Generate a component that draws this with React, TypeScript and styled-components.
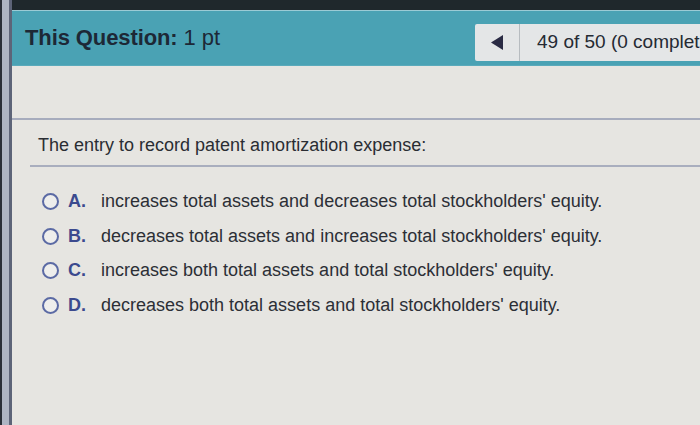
import React from "react";
import styled, { createGlobalStyle } from "styled-components";

const Global = createGlobalStyle`
  html, body { margin: 0; padding: 0; background: #e6e5e1; overflow: hidden; }
  body { font-family: "Liberation Sans", Arial, sans-serif; }
`;

const Page = styled.div`
  display: flex;
  width: 700px;
  height: 425px;
  overflow: hidden;
`;

const LeftStrip = styled.div`
  width: 9px;
  flex: none;
  background: linear-gradient(to right, #2a2f38 0 2px, #aeb5c3 2px 100%);
  border-right: 3px solid #5d6478;
`;

const Main = styled.div`
  flex: 1;
  display: flex;
  flex-direction: column;
  min-width: 0;
`;

const TopDark = styled.div`
  height: 10px;
  background: #1f282c;
`;

const Header = styled.div`
  height: 54px;
  background: #4aa2b4;
  border-top: 1px solid #9bcbd5;
  border-bottom: 1px solid #5aaabb;
  display: flex;
  align-items: center;
  justify-content: space-between;
  padding-left: 13px;
`;

const Title = styled.div`
  font-size: 22px;
  color: #1d2836;
  letter-spacing: -0.1px;
  b { font-weight: 700; }
`;

const Nav = styled.div`
  flex: none;
  display: flex;
  align-items: stretch;
  height: 37px;
  width: 225px;
  background: #e4e6e7;
  border-radius: 2px 0 0 2px;
  overflow: hidden;
  margin-top: 8px;
`;

const NavArrow = styled.div`
  flex: none;
  width: 44px;
  display: flex;
  align-items: center;
  justify-content: center;
  border-right: 1px solid #b7bcc0;
`;

const NavText = styled.div`
  display: flex;
  align-items: center;
  padding-left: 17px;
  font-size: 19px;
  color: #252a33;
  white-space: nowrap;
`;

const Spacer = styled.div`
  height: 52px;
  border-bottom: 2px solid #a7acbd;
`;

const Prompt = styled.div`
  margin-left: 18px;
  padding: 15px 0 9px 8px;
  font-size: 18px;
  color: #2a2d33;
  border-bottom: 2px solid #a9aebe;
`;

const Options = styled.div`
  display: flex;
  flex-direction: column;
  gap: 13.5px;
  padding: 24px 0 0 30px;
`;

const Option = styled.div`
  display: flex;
  align-items: center;
  height: 21px;
  font-size: 18px;
  color: #2c2f36;
`;

const Radio = styled.span`
  width: 13px;
  height: 13px;
  border: 2px solid #5b6aa4;
  border-radius: 50%;
  background: #eeeeec;
  flex: none;
`;

const Letter = styled.span`
  font-weight: 700;
  color: #3b4a8e;
  margin-left: 9px;
  width: 33px;
`;

const options = [
  ["A.", "increases total assets and decreases total stockholders' equity."],
  ["B.", "decreases total assets and increases total stockholders' equity."],
  ["C.", "increases both total assets and total stockholders' equity."],
  ["D.", "decreases both total assets and total stockholders' equity."],
];

export default function App() {
  return (
    <Page>
      <Global />
      <LeftStrip />
      <Main>
        <TopDark />
        <Header>
          <Title>
            <b>This Question:</b> 1 pt
          </Title>
          <Nav>
            <NavArrow>
              <svg width="13" height="15" viewBox="0 0 13 15">
                <polygon points="12,0 12,15 0,7.5" fill="#2a2b44" />
              </svg>
            </NavArrow>
            <NavText>49 of 50 (0 complete)</NavText>
          </Nav>
        </Header>
        <Spacer />
        <Prompt>The entry to record patent amortization expense:</Prompt>
        <Options>
          {options.map(([l, t]) => (
            <Option key={l}>
              <Radio />
              <Letter>{l}</Letter>
              <span>{t}</span>
            </Option>
          ))}
        </Options>
      </Main>
    </Page>
  );
}
